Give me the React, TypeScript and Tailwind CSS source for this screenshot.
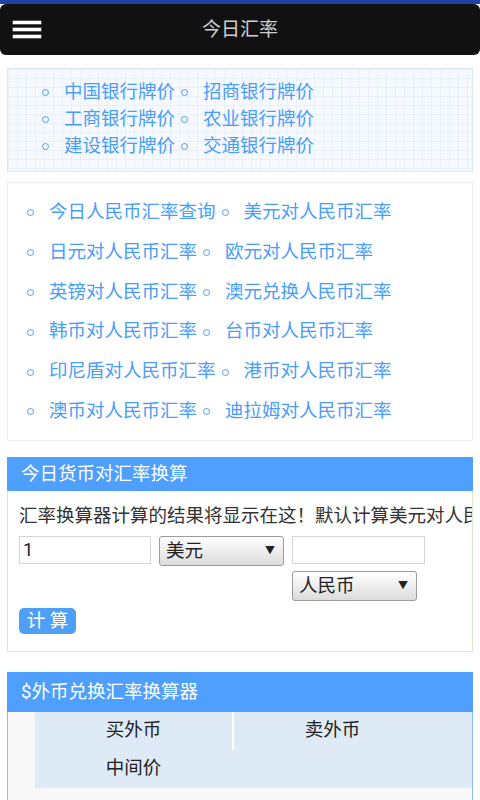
import React from "react";

const font = "font-['Roboto','Noto_Sans_CJK_SC',sans-serif]";

const bankRows = [
  ["中国银行牌价", "招商银行牌价"],
  ["工商银行牌价", "农业银行牌价"],
  ["建设银行牌价", "交通银行牌价"],
];

const rateRows = [
  ["今日人民币汇率查询", "美元对人民币汇率"],
  ["日元对人民币汇率", "欧元对人民币汇率"],
  ["英镑对人民币汇率", "澳元兑换人民币汇率"],
  ["韩币对人民币汇率", "台币对人民币汇率"],
  ["印尼盾对人民币汇率", "港币对人民币汇率"],
  ["澳币对人民币汇率", "迪拉姆对人民币汇率"],
];

const Bullet = () => (
  <span className="w-[7px] h-[7px] rounded-full border-[1.5px] border-[#4a9df8] shrink-0" />
);

const LinkItem = ({ label, first }: { label: string; first?: boolean }) => (
  <span className={`flex items-center ${first ? "" : "ml-[6px]"}`}>
    <Bullet />
    <a href="#" className="ml-[15px] text-[#4a9df8] whitespace-nowrap">
      {label}
    </a>
  </span>
);

const FakeSelect = ({ label, w }: { label: string; w: string }) => (
  <div
    className={`${w} h-[30px] flex items-center justify-between pl-[6px] pr-[8px] rounded-[3px] border border-[#9c9c9c] bg-gradient-to-b from-white to-[#dcdcdc] text-[#222]`}
  >
    <span className="leading-none">{label}</span>
    <span className="text-[10px] leading-none">▼</span>
  </div>
);

export default function App() {
  return (
    <div className={`${font} w-[480px] min-h-[800px] bg-white text-[18.5px] overflow-hidden`}>
      <div className="h-[4px] bg-[#2340a6]" />
      <header className="h-[51px] bg-[#111] rounded-[6px] relative flex items-center">
        <button className="ml-[13px] flex flex-col gap-[4px]">
          <span className="block w-[28px] h-[3px] bg-white shadow-[0_0_0_0.5px_#999]" />
          <span className="block w-[28px] h-[3px] bg-white shadow-[0_0_0_0.5px_#999]" />
          <span className="block w-[28px] h-[3px] bg-white shadow-[0_0_0_0.5px_#999]" />
        </button>
        <h1 className="absolute left-0 right-0 text-center text-[19px] text-[#cfcfcf] leading-none pointer-events-none">
          今日汇率
        </h1>
      </header>

      <div className="px-[7px]">
        <section className="mt-[13px] h-[104px] border border-[#dbe6f6] bg-[#f6faff] bg-[linear-gradient(to_right,#e9f0fa_1px,transparent_1px),linear-gradient(to_bottom,#e9f0fa_1px,transparent_1px)] bg-[size:9px_9px] pl-[34px] pt-[10px]">
          {bankRows.map((r) => (
            <div key={r[0]} className="flex items-center h-[27px]">
              <LinkItem label={r[0]} first />
              <LinkItem label={r[1]} />
            </div>
          ))}
        </section>

        <section className="mt-[10px] h-[259px] border border-[#eeeeee] pl-[19px] pt-[10px]">
          {rateRows.map((r) => (
            <div key={r[0]} className="flex items-center h-[39.8px]">
              <LinkItem label={r[0]} first />
              <LinkItem label={r[1]} />
            </div>
          ))}
        </section>

        <section className="mt-[16px]">
          <div className="h-[34px] bg-[#4fa0fe] text-white flex items-center pl-[14px] leading-none">
            今日货币对汇率换算
          </div>
          <div className="h-[161px] border border-t-0 border-[#d7ebc8] overflow-hidden pl-[11px] pt-[13px] text-[#333]">
            <p className="leading-[24px] whitespace-nowrap">
              汇率换算器计算的结果将显示在这！默认计算美元对人民币汇率
            </p>
            <div className="mt-[8px] flex items-start">
              <input
                defaultValue="1"
                className="w-[132px] h-[28px] border border-[#d5d5d5] px-[3px] text-[#222] outline-none"
              />
              <div className="ml-[8px]">
                <FakeSelect label="美元" w="w-[125px]" />
              </div>
              <div className="ml-[8px] flex flex-col gap-[7px]">
                <input className="w-[133px] h-[28px] border border-[#d5d5d5] outline-none" />
                <FakeSelect label="人民币" w="w-[125px]" />
              </div>
            </div>
            <button className="mt-[7px] w-[57px] h-[26px] rounded-[5px] bg-[#4d9ff8] text-white leading-none">
              计 算
            </button>
          </div>
        </section>

        <section className="mt-[20px]">
          <div className="h-[40px] bg-[#4fa0fe] text-white flex items-center pl-[14px] leading-none">
            $外币兑换汇率换算器
          </div>
          <div className="h-[100px] border-x border-[#8fbff5] bg-[#f8f8f8] pl-[27px] text-[#222]">
            <div className="bg-[#deeaf6]">
              <div className="flex h-[38px]">
                <div className="w-[197px] flex items-center justify-center">买外币</div>
                <div className="w-[2px] bg-white" />
                <div className="w-[197px] flex items-center justify-center">卖外币</div>
              </div>
              <div className="flex h-[38px]">
                <div className="w-[197px] flex items-center justify-center">中间价</div>
              </div>
            </div>
          </div>
        </section>
      </div>
    </div>
  );
}
